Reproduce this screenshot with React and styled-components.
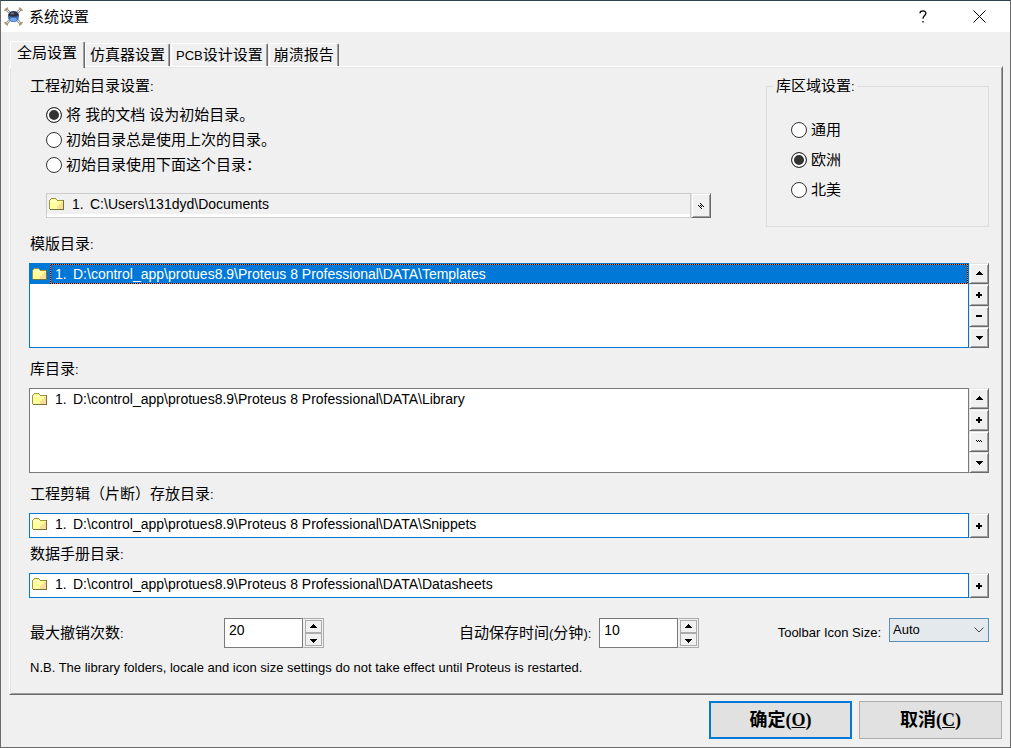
import React, { useState } from "react";
import styled, { createGlobalStyle, css } from "styled-components";

const GlobalStyle = createGlobalStyle`
  * {
    box-sizing: border-box;
  }

  body {
    margin: 0;
    background: #f0f0f0;
    color: #000;
    font-family: "Liberation Sans", "Noto Sans CJK SC", sans-serif;
    font-size: 13px;
    line-height: 20px;
  }

  button, input, select {
    font: inherit;
    color: inherit;
    margin: 0;
    border-radius: 0;
  }
`;

const raised = css`
  border: 1px solid;
  border-color: #e3e3e3 #696969 #696969 #e3e3e3;
  box-shadow: inset 1px 1px #fff, inset -1px -1px #a0a0a0;
`;

const Window = styled.div`
  min-height: 100vh;
  display: flex;
  flex-direction: column;
  background: #f0f0f0;
  border: 1px solid #6b6b6b;
  border-top-color: #2f4452;
`;

const TitleBar = styled.header`
  display: flex;
  align-items: center;
  height: 31px;
  padding: 0 2px 0 3px;
  background: #fff;
`;

const Title = styled.h1`
  flex: 1;
  margin: 0 0 0 6px;
  font-size: 15px;
  font-weight: 400;
`;

const CaptionButton = styled.button`
  display: flex;
  align-items: center;
  justify-content: center;
  width: 57px;
  height: 31px;
  padding: 0;
  border: none;
  background: transparent;
`;

const Body = styled.div`
  flex: 1;
  display: flex;
  flex-direction: column;
  padding: 8px 7px 8px 8px;
`;

const Tabs = styled.div`
  display: flex;
  align-items: flex-end;
  height: 26px;
  padding-left: 1px;
`;

const Tab = styled.button`
  height: 23px;
  margin-right: 1px;
  padding: 0 4px;
  font-size: 15px;
  background: #f0f0f0;
  border: 1px solid;
  border-color: #fff #696969 transparent #fff;
  border-radius: 2px 2px 0 0;
  border-bottom: none;
  box-shadow: inset -1px 0 #a0a0a0;

  ${({ $active }) =>
    $active &&
    css`
      position: relative;
      height: 27px;
      margin: 0 0 -2px;
      padding: 0 7px 4px 6px;
    `}
`;

const Panel = styled.main`
  flex: 1;
  padding: 9px 13px 14px 19px;
  border: 1px solid;
  border-color: #fff #696969 #696969 #fff;
  box-shadow: inset 1px 1px #e3e3e3, inset -1px -1px #a0a0a0;
`;

const TopRow = styled.div`
  display: flex;
  align-items: flex-start;
  gap: 55px;
  margin-bottom: 7px;
`;

const PlainGroup = styled.fieldset`
  flex: 1;
  min-width: 0;
  margin: 0;
  padding: 6px 0 0 17px;
  border: none;

  legend {
    margin-left: -16px;
    padding: 0;
    font-size: 15px;
  }
`;

const FramedGroup = styled.fieldset`
  width: 223px;
  margin: 0;
  padding: 19px 24px 21px;
  border: 1px solid #dcdcdc;

  legend {
    margin-left: -17px;
    padding: 0 2px;
    font-size: 15px;
  }
`;

const RadioLabel = styled.label`
  display: flex;
  align-items: center;
  gap: 4px;
  height: ${({ $height }) => $height}px;
  font-size: 15px;
`;

const Radio = styled.input`
  appearance: none;
  width: 16px;
  height: 16px;
  border: 1px solid #333;
  border-radius: 50%;
  background: #fff;

  &:checked {
    background: #333;
    box-shadow: inset 0 0 0 2px #fff;
  }
`;

const Label = styled.div`
  padding-left: 1px;
  margin-bottom: 9px;
  font-size: 15px;
`;

const Latin = styled.span`
  font-size: 13px;
  line-height: 1;
`;

const Section = styled.section`
  margin-bottom: ${({ $gap }) => $gap}px;
`;

const PathRow = styled.div`
  display: flex;
  height: ${({ $tall }) => ($tall ? 85 : 25)}px;
  margin-top: ${({ $top }) => $top || 0}px;
`;

const PathList = styled.ul`
  flex: 1;
  min-width: 0;
  margin: 0;
  padding: 0;
  list-style: none;
  background: #fff;
  border: 1px solid ${({ $border }) => $border};
`;

const PathItem = styled.li`
  display: flex;
  align-items: center;
  height: 20px;
  padding-left: 2px;
  font-size: 14px;
  background: ${({ $selected, $disabled }) =>
    $selected ? "#0078d7" : $disabled ? "#f0f0f0" : "#fff"};
  color: ${({ $selected }) => ($selected ? "#fff" : "#000")};
`;

const PathText = styled.span`
  flex: 1;
  display: flex;
  height: 20px;
  align-items: center;
  margin-left: 2px;
  padding-left: 4px;
  border: 1px solid transparent;
  white-space: nowrap;

  ${({ $focus }) =>
    $focus &&
    css`
      background: linear-gradient(#0078d7, #0078d7) padding-box,
        repeating-conic-gradient(#000 0 25%, #ff8728 0 50%) 0 0 / 2px 2px
          border-box;
    `}
`;

const PathNumber = styled.span`
  width: 18px;
`;

const SideButtons = styled.div`
  display: flex;
  flex-direction: column;
  width: 20px;
`;

const SmallButton = styled.button`
  flex: 1;
  display: flex;
  align-items: center;
  justify-content: center;
  padding: 0;
  background: #f0f0f0;
  ${raised}
`;

const Options = styled.div`
  display: flex;
  align-items: flex-start;
  margin: 20px 0 10px;
`;

const Field = styled.div`
  display: flex;
  align-items: flex-start;
  gap: 8px;
  margin-left: ${({ $left }) => $left || "1px"};
`;

const FieldLabel = styled.label`
  min-width: ${({ $width }) => $width || 0}px;
  padding-top: 5px;
  font-size: ${({ $size }) => $size || 15}px;
  white-space: nowrap;
`;

const Spin = styled.div`
  display: flex;
  width: 100px;
  height: 30px;
`;

const SpinInput = styled.input`
  width: 79px;
  padding: 0 4px 6px;
  border: 1px solid #7a7a7a;
  background: #fff;
  font-size: 14px;
`;

const SpinButtons = styled.div`
  flex: 1;
  display: flex;
  flex-direction: column;
  padding: 1px;
  border: 1px solid #acacac;
  border-left-color: #f0f0f0;
`;

const SpinButton = styled.button`
  flex: 1;
  display: flex;
  align-items: center;
  justify-content: center;
  padding: 0;
  border: 1px solid #acacac;
  background: #f0f0f0;
`;

const SelectWrap = styled.div`
  position: relative;
  width: 100px;

  svg {
    position: absolute;
    top: 9px;
    right: 5px;
    pointer-events: none;
  }
`;

const Select = styled.select`
  appearance: none;
  display: block;
  width: 100%;
  height: 24px;
  padding: 0 3px;
  border: 1px solid #5690bf;
  background: #e4e9ed;
`;

const Note = styled.p`
  margin: 0 0 0 1px;
`;

const Footer = styled.footer`
  display: flex;
  justify-content: flex-end;
  gap: 7px;
  padding: 6px 1px 0 0;
`;

const DialogButton = styled.button`
  width: 143px;
  height: 38px;
  padding: 0;
  font-family: "Liberation Serif", "Noto Sans CJK SC", serif;
  font-size: 18px;
  font-weight: 700;
  background: #e1e1e1;
  border: ${({ $primary }) =>
    $primary ? "2px solid #0078d7" : "1px solid #adadad"};
`;

// Latin runs are set a little smaller than the Chinese text around them
const Mixed = ({ text }) =>
  text
    .split(/([\x21-\x7e]+)/)
    .map((part, index) => (index % 2 ? <Latin key={index}>{part}</Latin> : part));

const AppIcon = () => (
  <svg width="19" height="19" viewBox="0 0 19 19" aria-hidden="true">
    <g fill="none" strokeLinecap="round">
      <path d="M2.5 2.5 16.5 16.5M16.5 2.5 2.5 16.5" stroke="#9a9ca2" strokeWidth="2.6" />
      <path d="M2.5 2.5 16.5 16.5M16.5 2.5 2.5 16.5" stroke="#e6e7ea" strokeWidth="1" />
      <path
        d="M1 3.4 3.4 1M15.6 1 18 3.4M1 15.6 3.4 18M15.6 18l2.4-2.4"
        stroke="#b29562"
        strokeWidth="1.5"
      />
    </g>
    <circle cx="9.5" cy="9.5" r="5.5" fill="#3a68b0" />
    <path d="M4.1 8.6a5.5 5.5 0 0 1 10.8 0q-5.4 2.4-10.8 0z" fill="#2b3140" />
    <ellipse cx="9.5" cy="12.4" rx="3.4" ry="1.8" fill="#6fa4e6" />
    <ellipse cx="8.4" cy="6.4" rx="2" ry="1" fill="#6d7484" />
  </svg>
);

const FolderIcon = () => (
  <svg width="16" height="14" viewBox="0 0 16 14" shapeRendering="crispEdges" aria-hidden="true">
    <path d="M1 2h1V1h5v1h1v1h6v9H1z" fill="#ffff9c" />
    <path d="M0 12V3h1V2h1V1h5v1h1v1h6v1H8V3H7V2H2v1H1v9z" fill="#9c9440" />
    <path d="M8 12V9h2V7h2V5h2v7z" fill="#fbdc98" />
    <path d="M14 3h1v10H1v-1h13z" fill="#77723c" />
    <path d="M1 4h7v1H1z" fill="#ffffd8" />
  </svg>
);

const glyphs = {
  up: "M3 0h1v1h1v1h1v1h1v1H0V3h1V2h1V1h1z",
  down: "M0 2h7v1H6v1H5v1H4v1H3V5H2V4H1V3H0z",
  add: "M2 0h2v2h2v2H4v2H2V4H0V2h2z",
  remove: "M0 2h6v2H0z",
  removeDisabled:
    "M0 2h1v1H0zM2 2h1v1H2zM4 2h1v1H4zM1 3h1v1H1zM3 3h1v1H3zM5 3h1v1H5z",
  addDisabled:
    "M2 0h1v1H2zM3 1h1v1H3zM0 2h1v1H0zM2 2h1v1H2zM4 2h1v1H4zM1 3h1v1H1zM3 3h1v1H3zM5 3h1v1H5zM2 4h1v1H2zM3 5h1v1H3z",
};

const Glyph = ({ name }) => (
  <svg width="7" height="6" viewBox="0 0 7 6" shapeRendering="crispEdges" aria-hidden="true">
    <path d={glyphs[name]} />
  </svg>
);

const buttonNames = {
  up: "上移",
  down: "下移",
  add: "添加",
  remove: "删除",
  removeDisabled: "删除",
  addDisabled: "添加",
};

const PathBox = ({ path, label, buttons, border = "#0078d7", tall, top, selected, disabled }) => (
  <PathRow $tall={tall} $top={top}>
    <PathList role="listbox" aria-label={label} $border={border}>
      <PathItem role="option" aria-selected={!!selected} $selected={selected} $disabled={disabled}>
        <FolderIcon />
        <PathText $focus={selected}>
          <PathNumber>1.</PathNumber>
          {path}
        </PathText>
      </PathItem>
    </PathList>
    <SideButtons>
      {buttons.map((name) => (
        <SmallButton
          key={name}
          type="button"
          aria-label={buttonNames[name]}
          disabled={name.endsWith("Disabled")}
        >
          <Glyph name={name} />
        </SmallButton>
      ))}
    </SideButtons>
  </PathRow>
);

const SpinBox = ({ id, initial }) => {
  const [value, setValue] = useState(initial);

  return (
    <Spin>
      <SpinInput
        id={id}
        inputMode="numeric"
        value={value}
        onChange={(e) => setValue(Number(e.target.value) || 0)}
      />
      <SpinButtons>
        <SpinButton type="button" aria-label="增加" onClick={() => setValue(value + 1)}>
          <Glyph name="up" />
        </SpinButton>
        <SpinButton
          type="button"
          aria-label="减少"
          onClick={() => setValue(Math.max(0, value - 1))}
        >
          <Glyph name="down" />
        </SpinButton>
      </SpinButtons>
    </Spin>
  );
};

const tabs = ["全局设置", "仿真器设置", "PCB设计设置", "崩溃报告"];

const startFolders = [
  "将 我的文档 设为初始目录。",
  "初始目录总是使用上次的目录。",
  "初始目录使用下面这个目录：",
];

const regions = ["通用", "欧洲", "北美"];

const DATA = "D:\\control_app\\protues8.9\\Proteus 8 Professional\\DATA\\";

const sections = [
  {
    label: "模版目录:",
    path: DATA + "Templates",
    buttons: ["up", "add", "remove", "down"],
    tall: true,
    selected: true,
    gap: 11,
  },
  {
    label: "库目录:",
    path: DATA + "Library",
    buttons: ["up", "add", "removeDisabled", "down"],
    border: "#7a7a7a",
    tall: true,
    gap: 11,
  },
  {
    label: "工程剪辑（片断）存放目录:",
    path: DATA + "Snippets",
    buttons: ["add"],
    gap: 6,
  },
  {
    label: "数据手册目录:",
    path: DATA + "Datasheets",
    buttons: ["add"],
    gap: 0,
  },
];

const App = () => {
  const [activeTab, setActiveTab] = useState(0);

  return (
    <>
      <GlobalStyle />
      <Window>
        <TitleBar>
          <AppIcon />
          <Title>系统设置</Title>
          <CaptionButton type="button" aria-label="帮助">
            <svg width="8" height="13" viewBox="0 0 8 13" fill="none" stroke="#000" strokeWidth="1.3">
              <path d="M1 3.2C1 .2 6.9 0 6.9 3.2 6.9 5.6 4 5.4 4 8.8M4 11v1.6" />
            </svg>
          </CaptionButton>
          <CaptionButton type="button" aria-label="关闭">
            <svg width="13" height="13" viewBox="0 0 13 13" fill="none" stroke="#000">
              <path d="M.5.5l12 12M12.5.5l-12 12" />
            </svg>
          </CaptionButton>
        </TitleBar>

        <Body>
          <Tabs role="tablist">
            {tabs.map((tab, index) => (
              <Tab
                key={tab}
                type="button"
                role="tab"
                aria-selected={index === activeTab}
                $active={index === activeTab}
                onClick={() => setActiveTab(index)}
              >
                <Mixed text={tab} />
              </Tab>
            ))}
          </Tabs>

          <Panel>
            <TopRow>
              <PlainGroup>
                <legend>
                  <Mixed text="工程初始目录设置:" />
                </legend>
                {startFolders.map((text, index) => (
                  <RadioLabel key={text} $height={25}>
                    <Radio type="radio" name="startFolder" defaultChecked={index === 0} />
                    {text}
                  </RadioLabel>
                ))}
                <PathBox
                  label="初始目录"
                  path={"C:\\Users\\131dyd\\Documents"}
                  buttons={["addDisabled"]}
                  border="#cccccc"
                  top={16}
                  disabled
                />
              </PlainGroup>
              <FramedGroup>
                <legend>
                  <Mixed text="库区域设置:" />
                </legend>
                {regions.map((text, index) => (
                  <RadioLabel key={text} $height={30}>
                    <Radio type="radio" name="region" defaultChecked={index === 1} />
                    {text}
                  </RadioLabel>
                ))}
              </FramedGroup>
            </TopRow>

            {sections.map(({ gap, ...section }) => (
              <Section key={section.label} $gap={gap}>
                <Label>
                  <Mixed text={section.label} />
                </Label>
                <PathBox {...section} />
              </Section>
            ))}

            <Options>
              <Field>
                <FieldLabel htmlFor="undo" $width={186}>
                  <Mixed text="最大撤销次数:" />
                </FieldLabel>
                <SpinBox id="undo" initial={20} />
              </Field>
              <Field $left="135px">
                <FieldLabel htmlFor="autosave">
                  <Mixed text="自动保存时间(分钟):" />
                </FieldLabel>
                <SpinBox id="autosave" initial={10} />
              </Field>
              <Field $left="auto">
                <FieldLabel htmlFor="iconSize" $size={13}>
                  Toolbar Icon Size:
                </FieldLabel>
                <SelectWrap>
                  <Select id="iconSize" defaultValue="Auto">
                    <option>Auto</option>
                    <option>Small</option>
                    <option>Large</option>
                  </Select>
                  <svg width="10" height="6" viewBox="0 0 10 6" fill="none" stroke="#444">
                    <path d="M.5.5 5 5 9.5.5" />
                  </svg>
                </SelectWrap>
              </Field>
            </Options>
            <Note>
              N.B. The library folders, locale and icon size settings do not
              take effect until Proteus is restarted.
            </Note>
          </Panel>

          <Footer>
            <DialogButton type="button" $primary>
              确定(<u>O</u>)
            </DialogButton>
            <DialogButton type="button">
              取消(<u>C</u>)
            </DialogButton>
          </Footer>
        </Body>
      </Window>
    </>
  );
};

export default App;
